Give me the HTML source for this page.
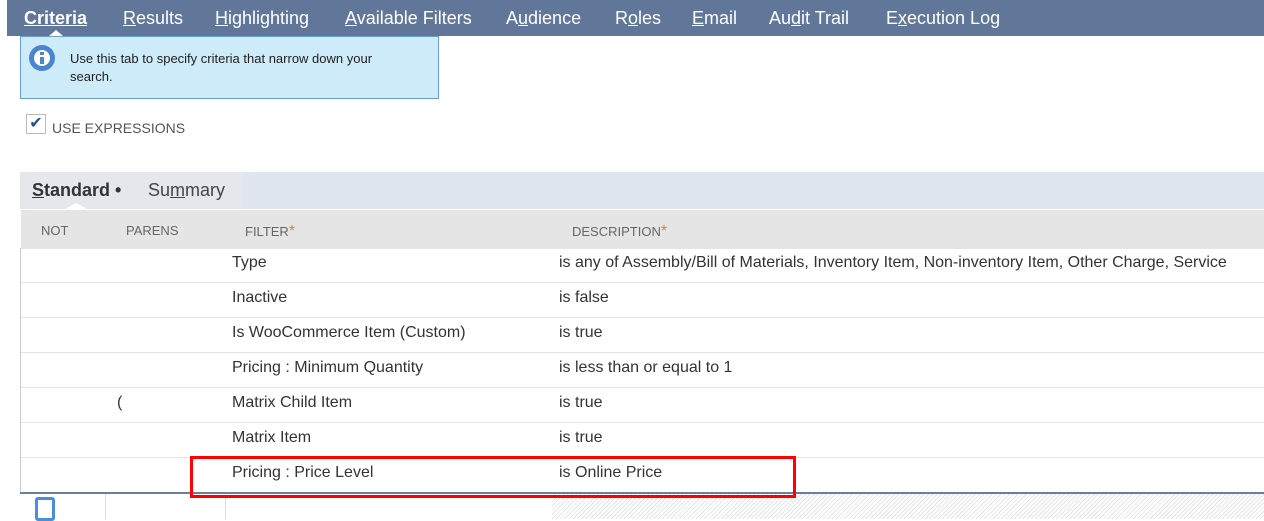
<!DOCTYPE html>
<html><head><style>
body{margin:0;width:1264px;height:519px;overflow:hidden;background:#fff;font-family:"Liberation Sans",sans-serif;position:relative}
.a{position:absolute}
.nav{left:7px;top:0;width:1257px;height:36px;background:#607799}
.nav span{position:absolute;top:8px;color:#fff;font-size:18px;white-space:nowrap}
.info{left:20px;top:36px;width:417px;height:61px;background:#cdebf8;border:1px solid #6a9fd0}
.row{left:21px;width:1243px;height:34px;border-bottom:1px solid #e4e4e4;font-size:16px;color:#333}
.row span{position:absolute;top:6px;white-space:nowrap}
.hd{position:absolute;top:13px;font-size:13px;color:#666}
.star{color:#d08a1e;font-size:16px}
</style></head><body>
<div class="a nav">
<span style="left:17px;font-weight:bold;text-decoration:underline">Criteria</span>
<span style="left:116px"><u>R</u>esults</span>
<span style="left:208px"><u>H</u>ighlighting</span>
<span style="left:338px"><u>A</u>vailable Filters</span>
<span style="left:499px">A<u>u</u>dience</span>
<span style="left:608px">R<u>o</u>les</span>
<span style="left:685px"><u>E</u>mail</span>
<span style="left:762px">Au<u>d</u>it Trail</span>
<span style="left:879px">E<u>x</u>ecution Log</span>
</div>
<div class="a" style="left:49px;top:30px;width:0;height:0;border-left:7px solid transparent;border-right:7px solid transparent;border-bottom:6px solid #fff"></div>
<div class="a info">
<div class="a" style="left:8px;top:8px;width:26px;height:26px;border-radius:50%;background:#4a86d0"></div>
<div class="a" style="left:13px;top:13px;width:16px;height:16px;border-radius:50%;background:#fff"></div>
<div class="a" style="left:19px;top:15px;width:4px;height:3px;background:#4a86d0"></div>
<div class="a" style="left:19px;top:20px;width:4px;height:7px;background:#4a86d0"></div>
<div class="a" style="left:49px;top:13px;font-size:13px;color:#222;line-height:18px;width:345px">Use this tab to specify criteria that narrow down your search.</div>
</div>
<div class="a" style="left:26px;top:114px;width:18px;height:18px;border:1px solid #bbb;background:#fff;color:#2a4f8f;font-size:16px;line-height:18px;text-align:center">✔</div>
<div class="a" style="left:52px;top:120px;font-size:14px;color:#555">USE EXPRESSIONS</div>
<div class="a" style="left:20px;top:172px;width:1244px;height:37px;background:#dfe6ef"></div>
<div class="a" style="left:20px;top:172px;width:222px;height:37px;background:#e5e7ec"></div>
<div class="a" style="left:32px;top:180px;font-size:18px;font-weight:bold;color:#333"><u>S</u>tandard •</div>
<div class="a" style="left:148px;top:180px;font-size:18px;color:#444">Su<u>m</u>mary</div>
<div class="a" style="left:65px;top:203px;width:0;height:0;border-left:11px solid transparent;border-right:11px solid transparent;border-bottom:6px solid #fff"></div>
<div class="a" style="left:21px;top:209px;width:1243px;height:39px;background:#e5e5e5;border-top:1px solid #fff">
<span class="hd" style="left:20px">NOT</span><span class="hd" style="left:105px">PARENS</span><span class="hd" style="left:224px">FILTER<span class="star">*</span></span><span class="hd" style="left:551px">DESCRIPTION<span class="star">*</span></span>
</div>
<div class="a" style="left:20px;top:248px;width:1px;height:245px;background:#ccc"></div>
<div class="a row" style="top:248px"><span style="left:211px">Type</span><span style="left:538px">is any of Assembly/Bill of Materials, Inventory Item, Non-inventory Item, Other Charge, Service</span></div>
<div class="a row" style="top:283px"><span style="left:211px">Inactive</span><span style="left:538px">is false</span></div>
<div class="a row" style="top:318px"><span style="left:211px">Is WooCommerce Item (Custom)</span><span style="left:538px">is true</span></div>
<div class="a row" style="top:353px"><span style="left:211px">Pricing : Minimum Quantity</span><span style="left:538px">is less than or equal to 1</span></div>
<div class="a row" style="top:388px"><span style="left:96px">(</span><span style="left:211px">Matrix Child Item</span><span style="left:538px">is true</span></div>
<div class="a row" style="top:423px"><span style="left:211px">Matrix Item</span><span style="left:538px">is true</span></div>
<div class="a row" style="top:458px"><span style="left:211px">Pricing : Price Level</span><span style="left:538px">is Online Price</span></div>
<div class="a" style="left:20px;top:492px;width:1244px;height:27px;background:#fff;border-top:2px solid #6a7f9f"></div>
<div class="a" style="left:552px;top:494px;width:712px;height:25px;background:repeating-linear-gradient(135deg,#fff 0 2px,#e4e4e4 2px 3px)"></div>
<div class="a" style="left:105px;top:494px;width:1px;height:25px;background:#ddd"></div>
<div class="a" style="left:225px;top:494px;width:1px;height:25px;background:#ddd"></div>
<div class="a" style="left:35px;top:497px;width:20px;height:24px;border:3px solid #4a8ee0;border-radius:3px;box-sizing:border-box;background:#fff"></div>
<div class="a" style="left:190px;top:456px;width:600px;height:36px;border:3px solid #f00"></div>
</body></html>
